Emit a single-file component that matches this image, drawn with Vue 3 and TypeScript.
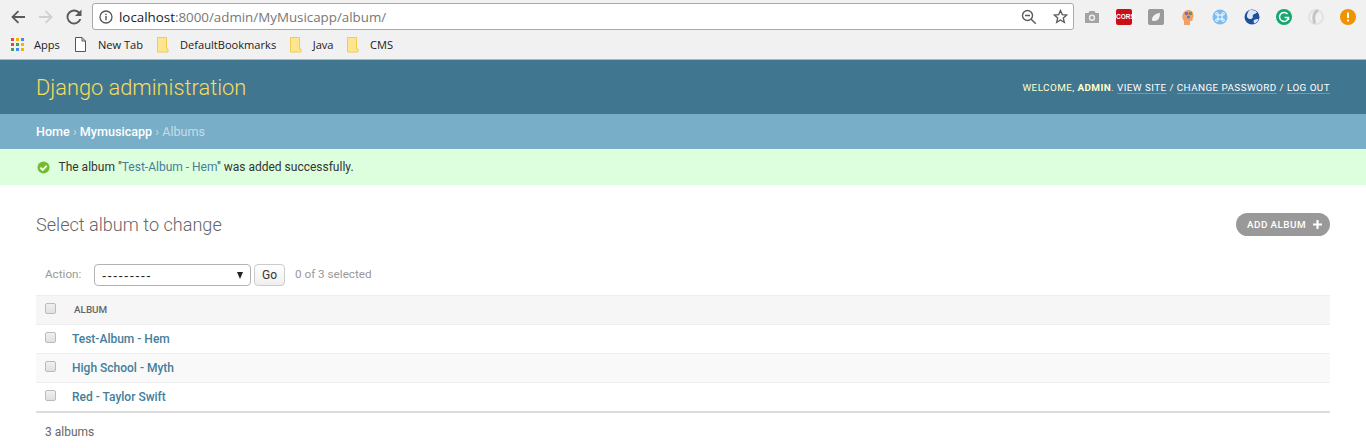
<template>
  <div class="page">
    <div class="chrome">
      <div class="toolbar">
        <div class="nav-buttons">
          <svg class="nav-icon" viewBox="0 0 16 16"><path d="M15 7H4.800l4.300-4.300L7.800 1.400 1.200 8l6.600 6.600 1.300-1.300L4.800 9H15z" fill="#5a5a5a" /></svg>
          <svg class="nav-icon" viewBox="0 0 16 16"><path d="M1 7h10.200L6.900 2.700l1.300-1.300L14.800 8l-6.600 6.600-1.300-1.300L11.200 9H1z" fill="#cfcfcf" /></svg>
          <svg class="nav-icon" viewBox="0 0 16 16"><path d="M13.400 2.600A7.500 7.500 0 1 0 15.300 10h-2a5.600 5.600 0 1 1-1.300-6L9 7h6.500V.5z" fill="#5a5a5a" /></svg>
        </div>
        <div class="omnibox">
          <svg class="info-icon" viewBox="0 0 14 14"><circle cx="7" cy="7" r="6" fill="none" stroke="#555" stroke-width="1.300" /><rect x="6.300" y="6" width="1.400" height="4.300" fill="#555" /><rect x="6.300" y="3.700" width="1.400" height="1.400" fill="#555" /></svg>
          <span class="url"><span class="host">localhost</span>:8000/admin/MyMusicapp/album/</span>
          <svg class="zoom-icon" viewBox="0 0 16 16"><circle cx="6.500" cy="6.500" r="5" fill="none" stroke="#5a5a5a" stroke-width="1.400" /><path d="M4 6.500h5M10.200 10.200l4.600 4.600" stroke="#5a5a5a" stroke-width="1.400" fill="none" /></svg>
          <svg class="star-icon" viewBox="0 0 16 16"><path d="M8 1.600l1.900 4.400 4.700.4-3.600 3.100 1.100 4.700L8 11.700l-4.100 2.500L5 9.500 1.400 6.400l4.700-.4z" fill="none" stroke="#5a5a5a" stroke-width="1.400" /></svg>
        </div>
        <div class="extensions">
          <span class="ext">
            <svg viewBox="0 0 16 16" width="16" height="16"><path d="M1 4h3.500l1-2h5l1 2H15v10H1z" fill="#a3a3a3" /><circle cx="8" cy="8.800" r="3.200" fill="#eee" /><circle cx="8" cy="8.800" r="1.800" fill="#a3a3a3" /></svg>
          </span>
          <span class="ext"><span class="cors">CORS</span></span>
          <span class="ext">
            <svg viewBox="0 0 16 16" width="16" height="16"><rect width="16" height="16" rx="2" fill="#9a9a9a" /><path d="M4 11c0-4 3-6.500 8-7 0 5-2 8-6 8-1 0-2-.4-2-1z" fill="#f2f2f2" /></svg>
          </span>
          <span class="ext">
            <svg viewBox="0 0 16 16" width="16" height="16"><path d="M4 16v-4C2.500 10.500 2 8.500 2.500 6 3.300 2.500 6 1 8.500 1c3.500 0 5 2.500 5 5.500 0 1.200-.5 2.500-1 3.500v2H10v4z" fill="#eea26a" /><circle cx="6.500" cy="4.500" r="1.800" fill="#8a62b0" /><circle cx="10.500" cy="4.500" r="1.800" fill="#5f9a58" /><circle cx="8.500" cy="8" r="1.500" fill="#4d7fc0" /></svg>
          </span>
          <span class="ext">
            <svg viewBox="0 0 16 16" width="16" height="16"><circle cx="8" cy="8" r="7.500" fill="#7cbcf0" /><path d="M6 6h4v4H6zM6 6H4.800a1.200 1.200 0 1 1 1.200-1.200zM10 6V4.800A1.200 1.200 0 1 1 11.200 6zM6 10v1.200A1.200 1.200 0 1 1 4.800 10zM10 10h1.200a1.200 1.200 0 1 1-1.200 1.200z" fill="none" stroke="#fff" stroke-width="1" /></svg>
          </span>
          <span class="ext">
            <svg viewBox="0 0 16 16" width="16" height="16"><circle cx="8" cy="8" r="7.500" fill="#1c4fa0" /><path d="M5 1.500c3-1 6-.5 8 2-1 1.500-3 1-4 2.500s1 2-1 3.500-4 0-5-1.500c-.5-2 .5-4 2-6.500zM10 11c1.500-1 3-1.200 4.500-1-.5 2-2 3.500-4 4.500-1-1-1.200-2.500-.5-3.500z" fill="#dce8f6" /></svg>
          </span>
          <span class="ext">
            <svg viewBox="0 0 16 16" width="16" height="16"><circle cx="8" cy="8" r="8" fill="#15a86e" /><path d="M11.500 5A4.500 4.500 0 1 0 12.500 8.500H8.500" fill="none" stroke="#fff" stroke-width="1.500" /><path d="M12.500 8.500v2.500" stroke="#fff" stroke-width="1.500" /></svg>
          </span>
          <span class="ext">
            <svg viewBox="0 0 16 16" width="16" height="16"><circle cx="8" cy="8" r="7" fill="none" stroke="#e2e2e2" stroke-width="2" /><path d="M10 1.500C6 3 5 8 6.500 14.500" fill="none" stroke="#c4c4c4" stroke-width="3" /></svg>
          </span>
          <span class="ext">
            <svg viewBox="0 0 16 16" width="16" height="16"><circle cx="8" cy="8" r="8" fill="#f09300" /><rect x="7" y="3.500" width="2" height="5.500" fill="#fff" /><rect x="7" y="10.500" width="2" height="2" fill="#fff" /></svg>
          </span>
        </div>
      </div>
      <div class="bookmarks">
        <span class="bookmark apps">
          <span class="apps-grid">
            <i v-for="(c, i) in appColors" :key="i" :style="{ background: c }"></i>
          </span>
          Apps
        </span>
        <span class="bookmark page-mark">
          <svg viewBox="0 0 11 15" width="11" height="15"><path d="M.5 .5h6.500L10.500 4v10.500H.5z M7 .5V4h3.500" fill="#fff" stroke="#555" stroke-width="1" /></svg>
          New Tab
        </span>
        <span v-for="f in folders" :key="f" class="bookmark folder">
          <svg viewBox="0 0 12 16" width="12" height="16"><path d="M.5 .5h9V12h1.500v3H.5z" fill="#fde68f" stroke="#f2cb4f" stroke-width="1" /></svg>
          {{ f }}
        </span>
      </div>
    </div>

    <header class="site-header">
      <h1 class="branding">Django administration</h1>
      <div class="user-tools">
        Welcome, <strong>admin</strong>.
        <a href="#">View site</a> /
        <a href="#">Change password</a> /
        <a href="#">Log out</a>
      </div>
    </header>
    <div class="breadcrumbs">
      <a href="#">Home</a> › <a href="#">Mymusicapp</a> › Albums
    </div>
    <div class="message">
      <svg class="ok-icon" viewBox="0 0 14 14"><circle cx="7" cy="7" r="6.500" fill="#70bf2b" /><path d="M3.600 7.200l2.500 2.500 4.300-4.500" fill="none" stroke="#fff" stroke-width="2" /></svg>
      <span>The album "<a href="#">Test-Album - Hem</a>" was added successfully.</span>
    </div>

    <main class="content">
      <div class="title-row">
        <h2 class="title">Select album to change</h2>
        <a href="#" class="add-btn">
          Add album
          <svg viewBox="0 0 10 10" width="9" height="9"><path d="M3.800 0h2.400v3.800H10v2.400H6.200V10H3.800V6.200H0V3.800h3.800z" fill="#fff" /></svg>
        </a>
      </div>
      <div class="actions">
        <label class="action-label">Action:</label>
        <div class="fake-select">
          <span>---------</span>
          <span class="caret"></span>
        </div>
        <button class="go-btn">Go</button>
        <span class="counter">0 of 3 selected</span>
      </div>
      <div class="list-head">
        <input type="checkbox" class="check" />
        <span class="head-label">Album</span>
      </div>
      <div v-for="(album, i) in albums" :key="album" :class="['list-row', { alt: i % 2 === 1 }]">
        <input type="checkbox" class="check" />
        <a href="#" class="album-link">{{ album }}</a>
      </div>
      <p class="paginator">3 albums</p>
    </main>
  </div>
</template>

<script setup lang="ts">
const appColors: string[] = [
  '#e8453c', '#f4b400', '#4285f4',
  '#e8453c', '#34a853', '#f4b400',
  '#34a853', '#4285f4', '#f4b400',
]
const folders: string[] = ['DefaultBookmarks', 'Java', 'CMS']
const albums: string[] = ['Test-Album - Hem', 'High School - Myth', 'Red - Taylor Swift']
</script>

<style>
html,
body {
  margin: 0;
  background: #fff;
  overflow: hidden;
}
</style>

<style scoped>
.page {
  width: 1366px;
  height: 448px;
  overflow: hidden;
  font-family: Roboto, "Liberation Sans", sans-serif;
  color: #333;
}

/* browser chrome */
.chrome {
  height: 59px;
  background: #f1f1f1;
  border-bottom: 1px solid #b4b4b4;
  font-family: "Open Sans", "Noto Sans", sans-serif;
}
.toolbar {
  height: 33px;
  display: flex;
  align-items: center;
}
.nav-buttons {
  width: 92px;
  display: flex;
  gap: 12px;
  padding-left: 10px;
  box-sizing: border-box;
}
.nav-icon {
  width: 16px;
  height: 16px;
}
.omnibox {
  width: 982px;
  height: 27px;
  box-sizing: border-box;
  background: #fff;
  border: 1px solid #a9a9a9;
  border-radius: 3px;
  display: flex;
  align-items: center;
  padding: 0 5px 0 6px;
}
.info-icon {
  width: 14px;
  height: 14px;
  margin-right: 6px;
}
.url {
  flex: 1;
  font-size: 13.35px;
  color: #777;
}
.host {
  color: #222;
}
.zoom-icon {
  width: 16px;
  height: 16px;
  margin-right: 16px;
}
.star-icon {
  width: 15px;
  height: 15px;
}
.extensions {
  display: flex;
  padding-left: 2px;
}
.ext {
  width: 32px;
  height: 20px;
  display: flex;
  align-items: center;
  justify-content: center;
}
.cors {
  width: 16px;
  height: 16px;
  background: #cc0f14;
  border-radius: 2px;
  color: #fff;
  font: bold 6.5px/16px "Liberation Sans", sans-serif;
  text-align: center;
}
.bookmarks {
  height: 26px;
  box-sizing: border-box;
  padding: 0 0 3px 11px;
  display: flex;
  align-items: center;
  font-size: 11.1px;
  color: #222;
}
.bookmark {
  display: flex;
  align-items: center;
}
.apps {
  gap: 10px;
  margin-right: 15px;
}
.apps-grid {
  display: grid;
  grid-template-columns: repeat(3, 3px);
  gap: 2px;
}
.apps-grid i {
  width: 3px;
  height: 3px;
  display: block;
}
.page-mark {
  gap: 12px;
  margin-right: 14px;
}
.folder {
  gap: 11px;
  margin-right: 13.500px;
}

/* django header */
.site-header {
  height: 54px;
  background: #417690;
  display: flex;
  align-items: center;
  justify-content: space-between;
  padding: 0 36px;
}
.branding {
  margin: 0;
  font-size: 21.8px;
  font-weight: 300;
  color: #f5dd5d;
}
.user-tools {
  font-size: 9.9px;
  letter-spacing: 0.42px;
  text-transform: uppercase;
  color: #ffc;
}
.user-tools strong {
  font-weight: 700;
}
.user-tools a {
  color: #fff;
  text-decoration: none;
  border-bottom: 1px solid rgba(255, 255, 255, 0.25);
}
.breadcrumbs {
  height: 35px;
  box-sizing: border-box;
  background: #79aec8;
  padding: 10px 36px;
  font-size: 12.6px;
  line-height: 16px;
  color: #c4dce8;
}
.breadcrumbs a {
  color: #fff;
  font-weight: 500;
  text-decoration: none;
}
.message {
  height: 36px;
  background: #dfd;
  display: flex;
  align-items: center;
  gap: 8.500px;
  padding-left: 37px;
  font-size: 12px;
}
.message a {
  color: #447e9b;
  text-decoration: none;
}
.ok-icon {
  width: 13px;
  height: 13px;
}

/* content */
.content {
  padding: 0 36px;
}
.title-row {
  height: 79px;
  display: flex;
  align-items: center;
  justify-content: space-between;
  padding-bottom: 1px;
  box-sizing: border-box;
}
.title {
  margin: 0;
  font-size: 18.1px;
  font-weight: 300;
  color: #666;
}
.add-btn {
  height: 23px;
  width: 94px;
  box-sizing: border-box;
  background: #999;
  border-radius: 12px;
  color: #fff;
  display: flex;
  align-items: center;
  justify-content: center;
  gap: 7px;
  padding-left: 3px;
  font-size: 9.9px;
  font-weight: 500;
  letter-spacing: 0.42px;
  text-transform: uppercase;
  text-decoration: none;
}
.actions {
  height: 31px;
  display: flex;
  align-items: flex-start;
  padding-left: 9px;
  font-size: 11.7px;
  line-height: 20px;
  color: #999;
}
.action-label {
  width: 49px;
}
.fake-select {
  width: 157px;
  height: 22px;
  box-sizing: border-box;
  border: 1px solid #b3b3b3;
  border-radius: 4px;
  background: #fff;
  display: flex;
  align-items: center;
  justify-content: space-between;
  padding: 0 7px;
  color: #222;
  font: 13px "Liberation Sans", sans-serif;
  letter-spacing: 1.2px;
  margin-right: 3px;
}
.caret {
  width: 0;
  height: 0;
  border-left: 3px solid transparent;
  border-right: 3px solid transparent;
  border-top: 7px solid #222;
}
.go-btn {
  width: 31px;
  height: 22px;
  padding: 0;
  border: 1px solid #ccc;
  border-radius: 4px;
  background: linear-gradient(#fff, #efefef);
  font: 12px Roboto, sans-serif;
  color: #333;
  margin-right: 10px;
}
.list-head {
  height: 30px;
  box-sizing: border-box;
  background: #f6f6f6;
  border-top: 1px solid #eee;
  border-bottom: 1px solid #eee;
  display: flex;
  align-items: center;
  padding-left: 9px;
}
.head-label {
  margin: -1px 0 0 18px;
  font-size: 9.9px;
  font-weight: 500;
  text-transform: uppercase;
  color: #666;
}
.check {
  appearance: none;
  width: 9px;
  height: 9px;
  margin: -4px 0 0;
  box-sizing: content-box;
  border: 1px solid #bbb;
  border-radius: 2px;
  background: linear-gradient(#f0f0f0, #e0e0e0);
}
.list-row {
  height: 29px;
  box-sizing: border-box;
  display: flex;
  align-items: center;
  padding-left: 9px;
  border-bottom: 1px solid #eee;
}
.list-row.alt {
  background: #f9f9f9;
}
.list-row:nth-last-child(2) {
  border-bottom: 2px solid #ddd;
  height: 30px;
}
.album-link {
  margin-left: 16px;
  font-size: 12px;
  font-weight: 500;
  color: #447e9b;
  text-decoration: none;
}
.paginator {
  margin: 11px 0 0 9px;
  font-size: 12px;
  line-height: 16px;
  color: #666;
}
</style>
